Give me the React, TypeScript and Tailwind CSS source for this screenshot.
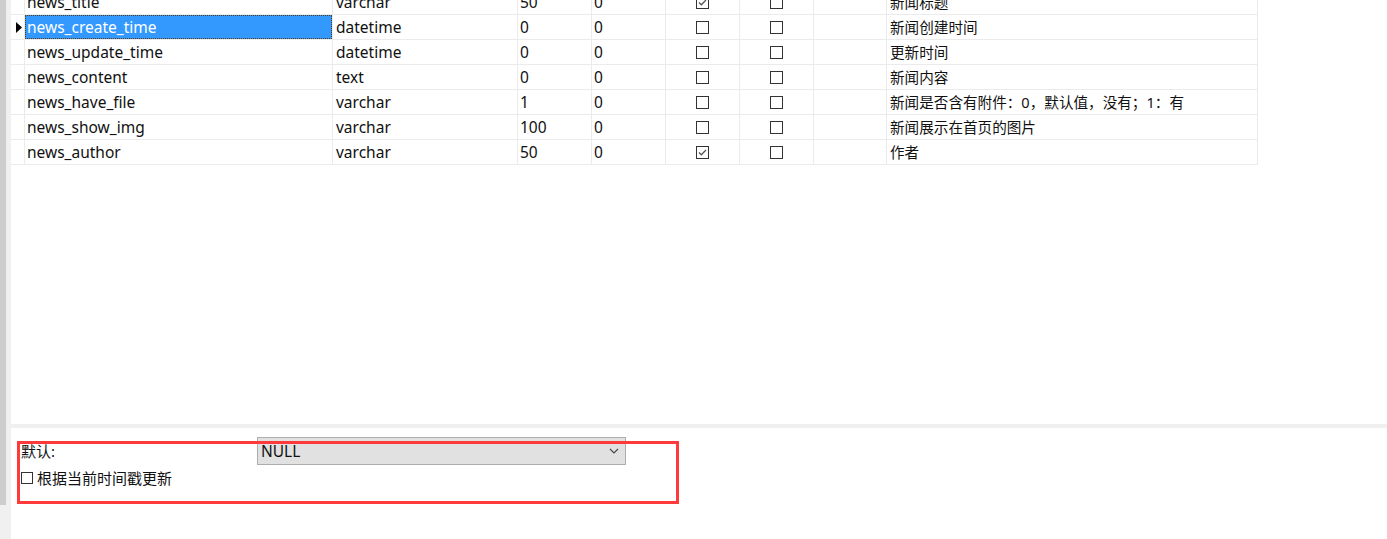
import React from "react";

type Row = {
  name: string;
  type: string;
  len: string;
  dec: string;
  notNull: boolean;
  virt: boolean;
  comment: string;
};

const rows: Row[] = [
  { name: "news_title", type: "varchar", len: "50", dec: "0", notNull: true, virt: false, comment: "新闻标题" },
  { name: "news_create_time", type: "datetime", len: "0", dec: "0", notNull: false, virt: false, comment: "新闻创建时间" },
  { name: "news_update_time", type: "datetime", len: "0", dec: "0", notNull: false, virt: false, comment: "更新时间" },
  { name: "news_content", type: "text", len: "0", dec: "0", notNull: false, virt: false, comment: "新闻内容" },
  { name: "news_have_file", type: "varchar", len: "1", dec: "0", notNull: false, virt: false, comment: "新闻是否含有附件：0，默认值，没有；1：有" },
  { name: "news_show_img", type: "varchar", len: "100", dec: "0", notNull: false, virt: false, comment: "新闻展示在首页的图片" },
  { name: "news_author", type: "varchar", len: "50", dec: "0", notNull: true, virt: false, comment: "作者" },
];

function Check({ checked }: { checked: boolean }) {
  return (
    <div className="w-[13px] h-[13px] border border-[#333333] bg-white flex items-center justify-center">
      {checked && (
        <svg width="11" height="11" viewBox="0 0 11 11">
          <path d="M2 5.5 L4.3 7.8 L9 3" fill="none" stroke="#555555" strokeWidth="1.3" />
        </svg>
      )}
    </div>
  );
}

const cell = "h-full border-r border-[#ebebeb] flex items-center overflow-hidden whitespace-nowrap";

export default function App() {
  return (
    <div
      className="w-[1387px] h-[539px] overflow-hidden flex relative bg-white text-[15px] text-[#111111]"
      style={{ fontFamily: '"Noto Sans", "Noto Sans CJK SC", sans-serif' }}
    >
      {/* left strip */}
      <div className="w-[11px] flex flex-col shrink-0">
        <div className="h-[505px] flex">
          <div className="w-[6px] bg-[#cdcdcd]" />
          <div className="w-[5px] bg-[#f0f0f0]" />
        </div>
        <div className="flex-1 bg-[#f0f0f0]" />
      </div>

      <div className="flex-1 flex flex-col">
        {/* grid */}
        <div className="h-[424px] overflow-hidden">
          <div className="-mt-[10px] w-[1247px] flex flex-col">
            {rows.map((r, i) => {
              const sel = i === 1;
              return (
                <div key={r.name} className="h-[25px] flex border-b border-[#ebebeb]">
                  <div className={`${cell} w-[14px] justify-center pl-[2px]`}>
                    {sel && (
                      <svg width="6" height="11" viewBox="0 0 6 11">
                        <path d="M0 0 L6 5.5 L0 11 Z" fill="#000" />
                      </svg>
                    )}
                  </div>
                  <div className={`${cell} w-[308px] text-[15.5px]`}>
                    {sel ? (
                      <div className="w-[307px] h-[24px] bg-[#3399ff] border border-dotted border-[#5a3a10] text-white flex items-center pl-[1px] pt-[2px] leading-none">
                        {r.name}
                      </div>
                    ) : (
                      <span className="pl-[2px] pt-[2px]">{r.name}</span>
                    )}
                  </div>
                  <div className={`${cell} w-[185px] pl-[3px] pt-[2px] text-[15.5px]`}>{r.type}</div>
                  <div className={`${cell} w-[74px] pl-[2px] pt-[2px] text-[15.5px]`}>{r.len}</div>
                  <div className={`${cell} w-[74px] pl-[2px] pt-[2px] text-[15.5px]`}>{r.dec}</div>
                  <div className={`${cell} w-[74px] justify-center`}>
                    <Check checked={r.notNull} />
                  </div>
                  <div className={`${cell} w-[74px] justify-center`}>
                    <Check checked={r.virt} />
                  </div>
                  <div className={`${cell} w-[73px]`} />
                  <div className={`${cell} w-[371px] pl-[3px] pt-[1px] text-[14.6px]`}>{r.comment}</div>
                </div>
              );
            })}
          </div>
        </div>

        {/* separator */}
        <div className="h-[4px] bg-[#f0f0f0]" />

        {/* bottom panel */}
        <div className="flex-1 pt-[9px] pl-[10px] flex flex-col">
          <div className="flex items-center h-[28px]">
            <div className="w-[236px]">默认:</div>
            <div className="w-[369px] h-[28px] bg-[#e1e1e1] border border-[#adadad] flex items-center justify-between pl-[3px] pr-[6px]">
              <span className="text-[15.5px] pt-[2px]">NULL</span>
              <svg width="10" height="6" viewBox="0 0 10 6">
                <path d="M1 1 L5 5 L9 1" fill="none" stroke="#444" strokeWidth="1.1" />
              </svg>
            </div>
          </div>
          <div className="mt-[4px] h-[18px] flex items-center gap-[4px]">
            <div className="w-[12px] h-[12px] border border-[#333333] bg-white" />
            <span>根据当前时间戳更新</span>
          </div>
        </div>
      </div>

      {/* red annotation box */}
      <div className="absolute left-[17px] top-[441px] w-[662px] h-[63px] border-[3px] border-[#ff3a3a] pointer-events-none" />
    </div>
  );
}
